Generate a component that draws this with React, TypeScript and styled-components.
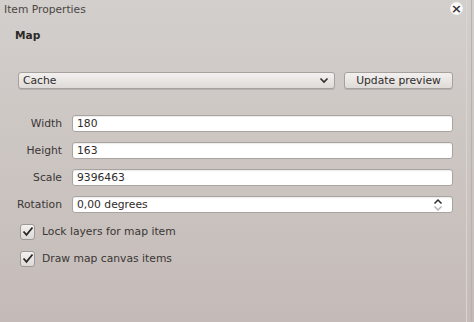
import React from 'react'
import styled, { createGlobalStyle } from 'styled-components'

const GlobalStyle = createGlobalStyle`
  html, body {
    margin: 0;
    padding: 0;
  }

  body {
    font-family: 'DejaVu Sans', 'Liberation Sans', sans-serif;
    color: #3a3634;
  }
`

export default function App() {
  return (
    <>
      <GlobalStyle />
      <Dock>
        <Panel>
          <TitleBar>
            <span>Item Properties</span>
            <CloseButton>×</CloseButton>
          </TitleBar>

          <SectionTitle>Map</SectionTitle>

          <ComboRow>
            <Combo>
              <span>Cache</span>
              <svg width="10" height="7" viewBox="0 0 10 7">
                <path d="M1.5 1.5 L5 5 L8.5 1.5" fill="none" stroke="#2f2c2a" strokeWidth="1.6" />
              </svg>
            </Combo>
            <PushButton>Update preview</PushButton>
          </ComboRow>

          <Form>
            <Label>Width</Label>
            <Field>180</Field>
            <Label>Height</Label>
            <Field>163</Field>
            <Label>Scale</Label>
            <Field>9396463</Field>
            <Label>Rotation</Label>
            <Field>
              <span>0,00 degrees</span>
              <svg width="10" height="14" viewBox="0 0 10 14">
                <path d="M1.5 5.5 L5 2 L8.5 5.5" fill="none" stroke="#2f2c2a" strokeWidth="1.5" />
                <path d="M1.5 8.5 L5 12 L8.5 8.5" fill="none" stroke="#b9b4b1" strokeWidth="1.5" />
              </svg>
            </Field>
          </Form>

          <Checks>
            <CheckRow>
              <CheckBox>
                <svg width="12" height="11" viewBox="0 0 12 11">
                  <path d="M1.5 5.5 L4.5 8.8 L10.5 1.5" fill="none" stroke="#2a2725" strokeWidth="1.8" />
                </svg>
              </CheckBox>
              Lock layers for map item
            </CheckRow>
            <CheckRow>
              <CheckBox>
                <svg width="12" height="11" viewBox="0 0 12 11">
                  <path d="M1.5 5.5 L4.5 8.8 L10.5 1.5" fill="none" stroke="#2a2725" strokeWidth="1.8" />
                </svg>
              </CheckBox>
              Draw map canvas items
            </CheckRow>
          </Checks>
        </Panel>
        <Gutter />
      </Dock>
    </>
  )
}

const Dock = styled.div`
  display: flex;
  width: 474px;
  height: 322px;
  overflow: hidden;
  background: linear-gradient(#d3cfcc, #c4bbb8);
`

const Panel = styled.div`
  width: 466px;
  border-right: 1px solid #d9d5d2;
  display: flex;
  flex-direction: column;
`

const Gutter = styled.div`
  width: 4px;
  border-right: 1px solid #b9b1ae;
`

const TitleBar = styled.div`
  height: 18px;
  display: flex;
  align-items: center;
  justify-content: space-between;
  padding: 0 4px 0 4px;
  font-size: 10.7px;
  color: #4a4644;
`

const CloseButton = styled.div`
  width: 13px;
  height: 13px;
  margin-top: -2px;
  margin-right: -1px;
  border-radius: 50%;
  background: radial-gradient(#ffffff 40%, #e9e6e4);
  display: flex;
  align-items: center;
  justify-content: center;
  font-size: 13px;
  font-weight: bold;
  line-height: 1;
  color: #3a3634;
`

const SectionTitle = styled.div`
  margin: 11px 0 0 15px;
  font-size: 10.6px;
  font-weight: bold;
  color: #2c2927;
`

const ComboRow = styled.div`
  display: flex;
  gap: 9px;
  margin: 31px 0 0 18px;
  width: 435px;
  height: 17px;
`

const Combo = styled.div`
  flex: 1;
  display: flex;
  align-items: center;
  justify-content: space-between;
  padding: 0 5px 0 4px;
  border: 1px solid #a7a19e;
  border-radius: 3px;
  background: linear-gradient(#f3f1f0, #dedad7);
  box-shadow: 0 1px 0 rgba(0, 0, 0, 0.12);
  font-size: 10.75px;
  color: #2f2c2a;
`

const PushButton = styled.div`
  width: 107px;
  display: flex;
  align-items: center;
  justify-content: center;
  border: 1px solid #a7a19e;
  border-radius: 3px;
  background: linear-gradient(#f3f1f0, #dedad7);
  box-shadow: 0 1px 0 rgba(0, 0, 0, 0.12);
  font-size: 10.75px;
  color: #2f2c2a;
`

const Form = styled.div`
  display: grid;
  grid-template-columns: 62px 381px;
  column-gap: 10px;
  row-gap: 10px;
  grid-auto-rows: 17px;
  margin-top: 26px;
`

const Label = styled.div`
  text-align: right;
  align-self: center;
  font-size: 10.75px;
  color: #3a3634;
`

const Field = styled.div`
  display: flex;
  align-items: center;
  justify-content: space-between;
  padding: 0 9px 0 4px;
  border: 1px solid #aaa4a1;
  border-radius: 3px;
  background: #ffffff;
  box-shadow: inset 0 1px 1px rgba(0, 0, 0, 0.08);
  font-size: 10.75px;
  color: #2f2c2a;
`

const Checks = styled.div`
  display: flex;
  flex-direction: column;
  gap: 12px;
  margin: 11px 0 0 20px;
`

const CheckRow = styled.div`
  display: flex;
  align-items: center;
  gap: 7px;
  height: 15px;
  font-size: 10.75px;
  color: #3a3634;
`

const CheckBox = styled.div`
  width: 13px;
  height: 14px;
  display: flex;
  align-items: center;
  justify-content: center;
  border: 1px solid #9f9996;
  border-radius: 3px;
  background: linear-gradient(#f4f2f1, #dcd8d5);
`
